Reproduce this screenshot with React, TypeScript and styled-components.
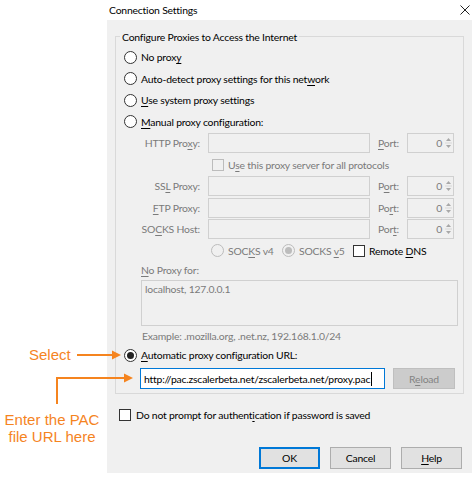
import React from "react";
import styled, { createGlobalStyle } from "styled-components";

const Global = createGlobalStyle`
  html, body { margin: 0; padding: 0; background: #fff; }
  * { box-sizing: border-box; }
`;

const UI_FONT = `Lato, "Open Sans", "Liberation Sans", sans-serif`;
const ORANGE = "#f5841f";
const DIS = "#7a7a7a";

const Page = styled.div`
  position: relative;
  display: flex;
  width: 474px;
  height: 477px;
  background: #fff;
  overflow: hidden;
  font-family: ${UI_FONT};
  font-size: 10.4px;
  letter-spacing: -0.2px;
  color: #000;
`;

const Side = styled.div`
  width: 107px;
  flex: none;
`;

const Dialog = styled.div`
  width: 365px;
  flex: none;
  display: flex;
  flex-direction: column;
`;

const TitleBar = styled.div`
  height: 20px;
  display: flex;
  align-items: center;
  justify-content: space-between;
  padding: 0 2px 0 2px;
  background: #fff;
`;

const CloseIcon = styled.svg`
  width: 10px;
  height: 10px;
`;

const Body = styled.div`
  height: 453px;
  background: #f0f0f0;
  padding: 16px 8px 0 8px;
  display: flex;
  flex-direction: column;
`;

const Group = styled.div`
  position: relative;
  width: 349px;
  border: 1px solid #d9d9d9;
  padding: 9.25px 8px 4px 8px;
  display: flex;
  flex-direction: column;
`;

const Legend = styled.span`
  position: absolute;
  top: -8px;
  left: 4px;
  padding: 0 2px;
  line-height: 16px;
  background: #f0f0f0;
`;

const Key = styled.span`
  text-decoration: underline;
  text-underline-offset: 2px;
`;

const Row = styled.div<{ $h?: number; $pl?: number; $mt?: number; $dis?: boolean }>`
  height: ${(p) => p.$h ?? 21.5}px;
  margin-top: ${(p) => p.$mt ?? 0}px;
  padding-left: ${(p) => p.$pl ?? 0}px;
  display: flex;
  align-items: center;
  white-space: nowrap;
  color: ${(p) => (p.$dis ? DIS : "#000")};
`;

const Radio = styled.span<{ $checked?: boolean; $dis?: boolean }>`
  width: 13px;
  height: 13px;
  flex: none;
  border-radius: 50%;
  border: 1px solid ${(p) => (p.$dis ? "#bcbcbc" : "#333")};
  background: ${(p) => (p.$dis ? "#f0f0f0" : "#fff")};
  display: flex;
  align-items: center;
  justify-content: center;
  margin-right: 4px;
  &::after {
    content: "";
    display: ${(p) => (p.$checked ? "block" : "none")};
    width: 7px;
    height: 7px;
    border-radius: 50%;
    background: ${(p) => (p.$dis ? "#bcbcbc" : "#222")};
  }
`;

const Check = styled.span<{ $dis?: boolean; $gap?: number }>`
  width: 12px;
  height: 12px;
  flex: none;
  border: 1px solid ${(p) => (p.$dis ? "#bcbcbc" : "#333")};
  background: ${(p) => (p.$dis ? "#f0f0f0" : "#fff")};
  margin-right: ${(p) => p.$gap ?? 4}px;
`;

const FieldLabel = styled.span`
  width: 76px;
  margin-right: 8px;
  text-align: right;
  color: ${DIS};
`;

const TextBox = styled.div`
  width: 162px;
  height: 20px;
  border: 1px solid #d0d0d0;
  background: #f0f0f0;
`;

const PortLabel = styled.span`
  width: 29px;
  margin-left: 8px;
  color: ${DIS};
`;

const PortBox = styled.div`
  width: 47px;
  height: 20px;
  border: 1px solid #d0d0d0;
  background: #f0f0f0;
  display: flex;
  align-items: center;
  justify-content: flex-end;
  color: ${DIS};
  padding-right: 1px;
`;

const Spinner = styled.svg`
  width: 7px;
  height: 16px;
  margin-left: 3px;
`;

const OptionItem = styled.span<{ $w?: number }>`
  width: ${(p) => (p.$w ? `${p.$w}px` : "auto")};
  display: flex;
  align-items: center;
  flex: none;
`;

const TextArea = styled.div`
  margin: 1px 0 0 17px;
  width: 317px;
  height: 46px;
  border: 1px solid #d0d0d0;
  background: #f0f0f0;
  color: ${DIS};
  padding: 0 3px;
  line-height: 16px;
`;

const UrlInput = styled.div`
  width: 247px;
  height: 21px;
  border: 1px solid #0078d7;
  background: #fff;
  padding: 0 3px;
  display: flex;
  align-items: center;
  line-height: 16px;
  overflow: hidden;
`;

const Caret = styled.span`
  flex: none;
  width: 1px;
  height: 14px;
  background: #000;
  margin-left: 1px;
`;

const PushButton = styled.div<{ $w: number; $default?: boolean; $dis?: boolean }>`
  width: ${(p) => p.$w}px;
  height: ${(p) => (p.$dis ? 21 : 22)}px;
  flex: none;
  display: flex;
  align-items: center;
  justify-content: center;
  border: 1px solid ${(p) => (p.$default ? "#0078d7" : p.$dis ? "#bfbfbf" : "#adadad")};
  background: ${(p) => (p.$dis ? "#cccccc" : "#e1e1e1")};
  color: ${(p) => (p.$dis ? "#838383" : "#000")};
  box-shadow: ${(p) => (p.$default ? "inset 0 0 0 1px #0078d7" : "none")};
`;

const ReloadWrap = styled.div`
  margin-left: 8px;
`;

const ButtonRow = styled.div`
  margin-top: 24px;
  display: flex;
  justify-content: flex-end;
  gap: 10px;
  padding-right: 2px;
`;

const Overlay = styled.div`
  position: absolute;
  inset: 0;
  pointer-events: none;
  font-family: "Liberation Sans", Arial, sans-serif;
  font-size: 15px;
  letter-spacing: 0;
  color: ${ORANGE};
`;

const Callout = styled.div<{ $left: number; $top: number; $w?: number }>`
  position: absolute;
  left: ${(p) => p.$left}px;
  top: ${(p) => p.$top}px;
  width: ${(p) => (p.$w ? `${p.$w}px` : "auto")};
  text-align: center;
  line-height: 17px;
`;

const Arrows = styled.svg`
  position: absolute;
  left: 0;
  top: 0;
`;

function ProxyLine({ label, port }: { label: React.ReactNode; port: React.ReactNode }) {
  return (
    <Row>
      <FieldLabel>{label}</FieldLabel>
      <TextBox />
      <PortLabel>{port}</PortLabel>
      <PortBox>
        0
        <Spinner viewBox="0 0 7 16">
          <path d="M1 6 L3.5 3 L6 6 Z" fill="#a8a8a8" />
          <line x1="0" y1="8" x2="7" y2="8" stroke="#d8d8d8" strokeWidth="1" />
          <path d="M1 10 L3.5 13 L6 10 Z" fill="#a8a8a8" />
        </Spinner>
      </PortBox>
    </Row>
  );
}

export default function App() {
  return (
    <>
      <Global />
      <Page>
        <Side />
        <Dialog>
          <TitleBar>
            <span>Connection Settings</span>
            <CloseIcon viewBox="0 0 10 10">
              <path d="M0.5 0.5 L9.5 9.5 M9.5 0.5 L0.5 9.5" stroke="#222" strokeWidth="1" />
            </CloseIcon>
          </TitleBar>
          <Body>
            <Group>
              <Legend>Configure Proxies to Access the Internet</Legend>
              <Row>
                <Radio />
                <span>
                  No prox<Key>y</Key>
                </span>
              </Row>
              <Row>
                <Radio />
                <span>
                  Auto-detect proxy settings for this net<Key>w</Key>ork
                </span>
              </Row>
              <Row>
                <Radio />
                <span>
                  <Key>U</Key>se system proxy settings
                </span>
              </Row>
              <Row>
                <Radio />
                <span>
                  <Key>M</Key>anual proxy configuration:
                </span>
              </Row>
              <ProxyLine
                label={
                  <>
                    HTTP Pro<Key>x</Key>y:
                  </>
                }
                port={
                  <>
                    <Key>P</Key>ort:
                  </>
                }
              />
              <Row $pl={88} $dis>
                <Check $dis />
                <span>
                  U<Key>s</Key>e this proxy server for all protocols
                </span>
              </Row>
              <ProxyLine
                label={
                  <>
                    SS<Key>L</Key> Proxy:
                  </>
                }
                port={
                  <>
                    P<Key>o</Key>rt:
                  </>
                }
              />
              <ProxyLine
                label={
                  <>
                    <Key>F</Key>TP Proxy:
                  </>
                }
                port={
                  <>
                    Po<Key>r</Key>t:
                  </>
                }
              />
              <ProxyLine
                label={
                  <>
                    SO<Key>C</Key>KS Host:
                  </>
                }
                port={
                  <>
                    Por<Key>t</Key>:
                  </>
                }
              />
              <Row $pl={87} $dis>
                <OptionItem $w={71}>
                  <Radio $dis />
                  <span>
                    SOC<Key>K</Key>S v4
                  </span>
                </OptionItem>
                <OptionItem $w={71}>
                  <Radio $dis $checked />
                  <span>
                    SOCKS <Key>v</Key>5
                  </span>
                </OptionItem>
                <OptionItem>
                  <Check $gap={4} />
                  <span style={{ color: "#000" }}>
                    Remote <Key>D</Key>NS
                  </span>
                </OptionItem>
              </Row>
              <Row $h={18} $pl={17} $dis>
                <span>
                  <Key>N</Key>o Proxy for:
                </span>
              </Row>
              <TextArea>localhost, 127.0.0.1</TextArea>
              <Row $h={18} $mt={1} $pl={18} $dis>
                <span>Example: .mozilla.org, .net.nz, 192.168.1.0/24</span>
              </Row>
              <Row $h={20}>
                <Radio $checked />
                <span>
                  <Key>A</Key>utomatic proxy configuration URL:
                </span>
              </Row>
              <Row $h={21} $mt={3} $pl={16}>
                <UrlInput>
                  <span>http://pac.zscalerbeta.net/zscalerbeta.net/proxy.pac</span>
                  <Caret />
                </UrlInput>
                <ReloadWrap>
                  <PushButton $w={62} $dis>
                    <span>
                      R<Key>e</Key>load
                    </span>
                  </PushButton>
                </ReloadWrap>
              </Row>
            </Group>
            <Row $h={16} $mt={13} $pl={4}>
              <Check $gap={5} />
              <span>
                Do not prompt for authent<Key>i</Key>cation if password is saved
              </span>
            </Row>
            <ButtonRow>
              <PushButton $w={61} $default>
                OK
              </PushButton>
              <PushButton $w={61}>Cancel</PushButton>
              <PushButton $w={61}>
                <span>
                  <Key>H</Key>elp
                </span>
              </PushButton>
            </ButtonRow>
          </Body>
        </Dialog>
        <Overlay>
          <Callout $left={29} $top={346}>
            Select
          </Callout>
          <Callout $left={0} $top={411} $w={104}>
            Enter the PAC
            <br />
            file URL here
          </Callout>
          <Arrows width="474" height="477" viewBox="0 0 474 477">
            <line x1="77" y1="355" x2="114" y2="355" stroke={ORANGE} strokeWidth="2" />
            <polygon points="112,350.5 121,355 112,359.5" fill={ORANGE} />
            <path d="M57 404 V378 H126" fill="none" stroke={ORANGE} strokeWidth="2" />
            <polygon points="124,373.5 133,378 124,382.5" fill={ORANGE} />
          </Arrows>
        </Overlay>
      </Page>
    </>
  );
}
